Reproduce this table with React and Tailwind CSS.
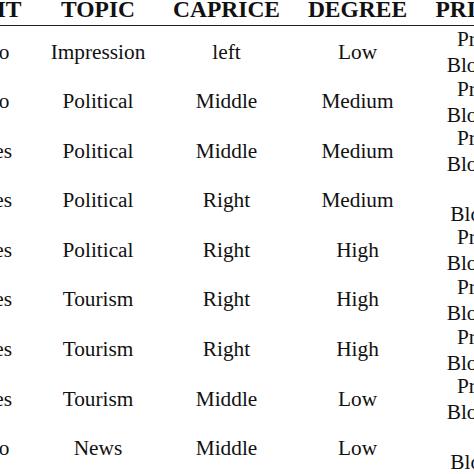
import React from 'react';

const rows = [
    { a: 'No', topic: 'Impression', caprice: 'left', degree: 'Low', pr: true, shift: false },
    { a: 'No', topic: 'Political', caprice: 'Middle', degree: 'Medium', pr: true, shift: false },
    { a: 'Yes', topic: 'Political', caprice: 'Middle', degree: 'Medium', pr: true, shift: false },
    { a: 'Yes', topic: 'Political', caprice: 'Right', degree: 'Medium', pr: false, shift: true },
    { a: 'Yes', topic: 'Political', caprice: 'Right', degree: 'High', pr: true, shift: false },
    { a: 'Yes', topic: 'Tourism', caprice: 'Right', degree: 'High', pr: true, shift: false },
    { a: 'Yes', topic: 'Tourism', caprice: 'Right', degree: 'High', pr: true, shift: false },
    { a: 'Yes', topic: 'Tourism', caprice: 'Middle', degree: 'Low', pr: true, shift: false },
    { a: 'No', topic: 'News', caprice: 'Middle', degree: 'Low', pr: false, shift: true },
];

const cols = 'grid grid-cols-[93px_110px_147px_115px_200px]';

const App = () => {
    return (
        <div className="w-[474px] h-[474px] overflow-hidden bg-white text-[#111] font-['Liberation_Serif',serif]">
            <div className="w-[665px] ml-[-50px] mt-[-4px]">
                {/* Header */}
                <div className={`${cols} h-[30px] text-[23.5px] font-bold leading-[26px] border-b-[1.5px] border-[#222] whitespace-nowrap`}>
                    <div className="flex justify-end pr-[21.5px]">EXPLICIT</div>
                    <div className="text-center">TOPIC</div>
                    <div className="text-center">CAPRICE</div>
                    <div className="text-center">DEGREE</div>
                    <div className="pl-[20.5px]">PRIORITY</div>
                </div>

                {/* Body rows */}
                {rows.map((r, i) => (
                    <div key={i} className={`${cols} h-[49.6px] text-[21.3px] leading-[49.6px] whitespace-nowrap`}>
                        <div className="text-center pt-[1.5px]">{r.a}</div>
                        <div className="text-center pt-[1.5px]">{r.topic}</div>
                        <div className="text-center pt-[1.5px]">{r.caprice}</div>
                        <div className="text-center pt-[1.5px]">{r.degree}</div>
                        <div className="flex flex-col justify-center leading-[26px]">
                            <div className="h-[26px] pl-[42px]">{r.pr ? 'Private' : ''}</div>
                            <div className={r.shift ? 'h-[26px] pl-[35.3px]' : 'h-[26px] pl-[31.7px]'}>Block</div>
                        </div>
                    </div>
                ))}
            </div>
        </div>
    );
};

export default App;
